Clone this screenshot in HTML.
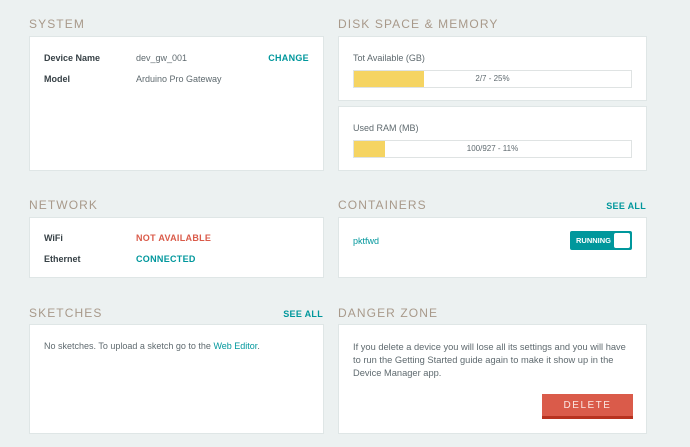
<!DOCTYPE html>
<html><head><style>
*{margin:0;padding:0;box-sizing:border-box}
body{width:690px;height:447px;background:#ecf1f1;font-family:"Liberation Sans",sans-serif;position:relative;overflow:hidden;color:#4e5b61}
.t{position:absolute;font-size:12px;letter-spacing:1.1px;color:#a8998a}
.c{position:absolute;background:#fff;border:1px solid #dfe6e6}
.a{position:absolute;font-size:9px;font-weight:bold;color:#00979c;letter-spacing:.3px}
.r{text-align:right}
.l{position:absolute;font-size:9px;font-weight:bold;color:#374146}
.v{position:absolute;font-size:9px;color:#5f6a6f}
.bar{position:absolute;left:14px;width:279px;height:18px;border:1px solid #dfe3e3;background:#fff}
.bar i{position:absolute;left:0;top:0;bottom:0;background:#f5d462}
.bar span{position:absolute;width:100%;text-align:center;top:3px;font-size:8px;color:#5f6a6f}
</style></head><body>
<div class="t" style="left:29px;top:17px">SYSTEM</div>
<div class="t" style="left:338px;top:17px">DISK SPACE &amp; MEMORY</div>
<div class="c" style="left:29px;top:36px;width:295px;height:135px">
<div class="l" style="left:14px;top:16px">Device Name</div>
<div class="v" style="left:106px;top:16px">dev_gw_001</div>
<div class="a r" style="right:14px;top:16px">CHANGE</div>
<div class="l" style="left:14px;top:37px">Model</div>
<div class="v" style="left:106px;top:37px">Arduino Pro Gateway</div>
</div>
<div class="c" style="left:338px;top:36px;width:309px;height:65px">
<div class="v" style="left:14px;top:16px">Tot Available (GB)</div>
<div class="bar" style="top:33px"><i style="width:70px"></i><span>2/7 - 25%</span></div>
</div>
<div class="c" style="left:338px;top:106px;width:309px;height:65px">
<div class="v" style="left:14px;top:16px">Used RAM (MB)</div>
<div class="bar" style="top:33px"><i style="width:31px"></i><span>100/927 - 11%</span></div>
</div>
<div class="t" style="left:29px;top:198px">NETWORK</div>
<div class="t" style="left:338px;top:198px">CONTAINERS</div>
<div class="a r" style="right:44px;top:201px">SEE ALL</div>
<div class="c" style="left:29px;top:217px;width:295px;height:61px">
<div class="l" style="left:14px;top:15px">WiFi</div>
<div class="a" style="left:106px;top:15px;color:#da5b4a">NOT AVAILABLE</div>
<div class="l" style="left:14px;top:36px">Ethernet</div>
<div class="a" style="left:106px;top:36px">CONNECTED</div>
</div>
<div class="c" style="left:338px;top:217px;width:309px;height:61px">
<div class="v" style="left:14px;top:18px;color:#00979c">pktfwd</div>
<div style="position:absolute;left:231px;top:13px;width:62px;height:19px;background:#00979c;border-radius:2px">
<span style="position:absolute;left:6px;top:5px;font-size:7.5px;color:#fff;font-weight:bold">RUNNING</span>
<span style="position:absolute;right:2px;top:2px;width:16px;height:15px;background:#fff;border-radius:2px"></span></div>
</div>
<div class="t" style="left:29px;top:306px">SKETCHES</div>
<div class="a r" style="right:367px;top:309px">SEE ALL</div>
<div class="t" style="left:338px;top:306px">DANGER ZONE</div>
<div class="c" style="left:29px;top:324px;width:295px;height:110px">
<div class="v" style="left:14px;top:16px">No sketches. To upload a sketch go to the <span style="color:#00979c">Web Editor</span>.</div>
</div>
<div class="c" style="left:338px;top:324px;width:309px;height:110px">
<div class="v" style="left:14px;top:16px;white-space:nowrap;line-height:13px;font-size:9.3px">If you delete a device you will lose all its settings and you will have<br>to run the Getting Started guide again to make it show up in the<br>Device Manager app.</div>
<div style="position:absolute;left:203px;top:69px;width:91px;height:25px;background:#da5b4a;border-bottom:3px solid #b8321f;color:#fbe6e2;font-size:10px;letter-spacing:1.5px;text-align:center;line-height:23px">DELETE</div>
</div>
</body></html>
